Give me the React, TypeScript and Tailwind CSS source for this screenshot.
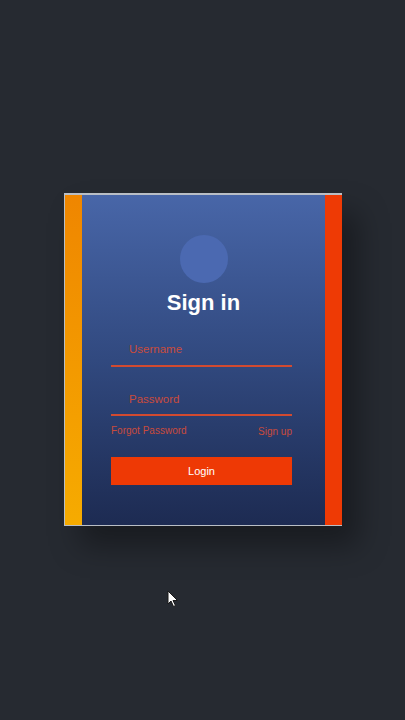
import React from 'react';

const font = { fontFamily: '"Liberation Sans", Arial, sans-serif' };

const Cursor: React.FC = () => (
    <svg width="12" height="18" viewBox="0 0 12 18" className="absolute left-[167px] top-[590px]">
        <path d="M1 1 L1 14 L4 11 L6.5 16.5 L8.5 15.5 L6 10.5 L10.5 10.5 Z" fill="#ffffff" stroke="#1a1a1a" strokeWidth="1" strokeLinejoin="round" />
    </svg>
);

const Field: React.FC<{ label: string; pad: string }> = ({ label, pad }) => (
    <div className={`border-b-2 border-[#d24a30] pl-[18px] leading-[16px] ${pad}`}>
        <span className="text-[11.5px] text-[#c94b3c]">{label}</span>
    </div>
);

const App: React.FC = () => {
    return (
        <div className="relative w-[405px] h-[720px] overflow-hidden bg-[#262a31] pt-[193px] pl-[64px]" style={font}>
            <div className="flex w-[278px] h-[333px] border-t-2 border-l border-b border-[#b9bec5] shadow-[16px_20px_28px_rgba(0,0,0,0.35)]">
                <div className="w-[17px] bg-gradient-to-b from-[#ef8600] to-[#f6ab00]" />
                <div className="flex-1 flex flex-col bg-gradient-to-b from-[#4866a8] via-[#31497f] to-[#1d2b52]">
                    <div className="flex flex-col items-center">
                        <div className="mt-[40px] w-[48px] h-[48px] rounded-full bg-[#4b69b1]" />
                        <h1 className="mt-[6px] text-[22px] leading-[28px] font-bold text-white">Sign in</h1>
                    </div>
                    <div className="pl-[29px] pr-[33px]">
                        <div className="mt-[23px]">
                            <Field label="Username" pad="pb-[8px]" />
                        </div>
                        <div className="mt-[23px]">
                            <Field label="Password" pad="pb-[7px]" />
                        </div>
                        <div className="mt-[9px] flex justify-between text-[10px] leading-[12px] text-[#c94b3c]">
                            <span>Forgot Password</span>
                            <span className="mt-[1px]">Sign up</span>
                        </div>
                        <button className="w-full mt-[19px] h-[28px] bg-[#ee3905] text-white text-[11px]">Login</button>
                    </div>
                </div>
                <div className="w-[17px] bg-[#ee3a05]" />
            </div>
            <Cursor />
        </div>
    );
};

export default App;
